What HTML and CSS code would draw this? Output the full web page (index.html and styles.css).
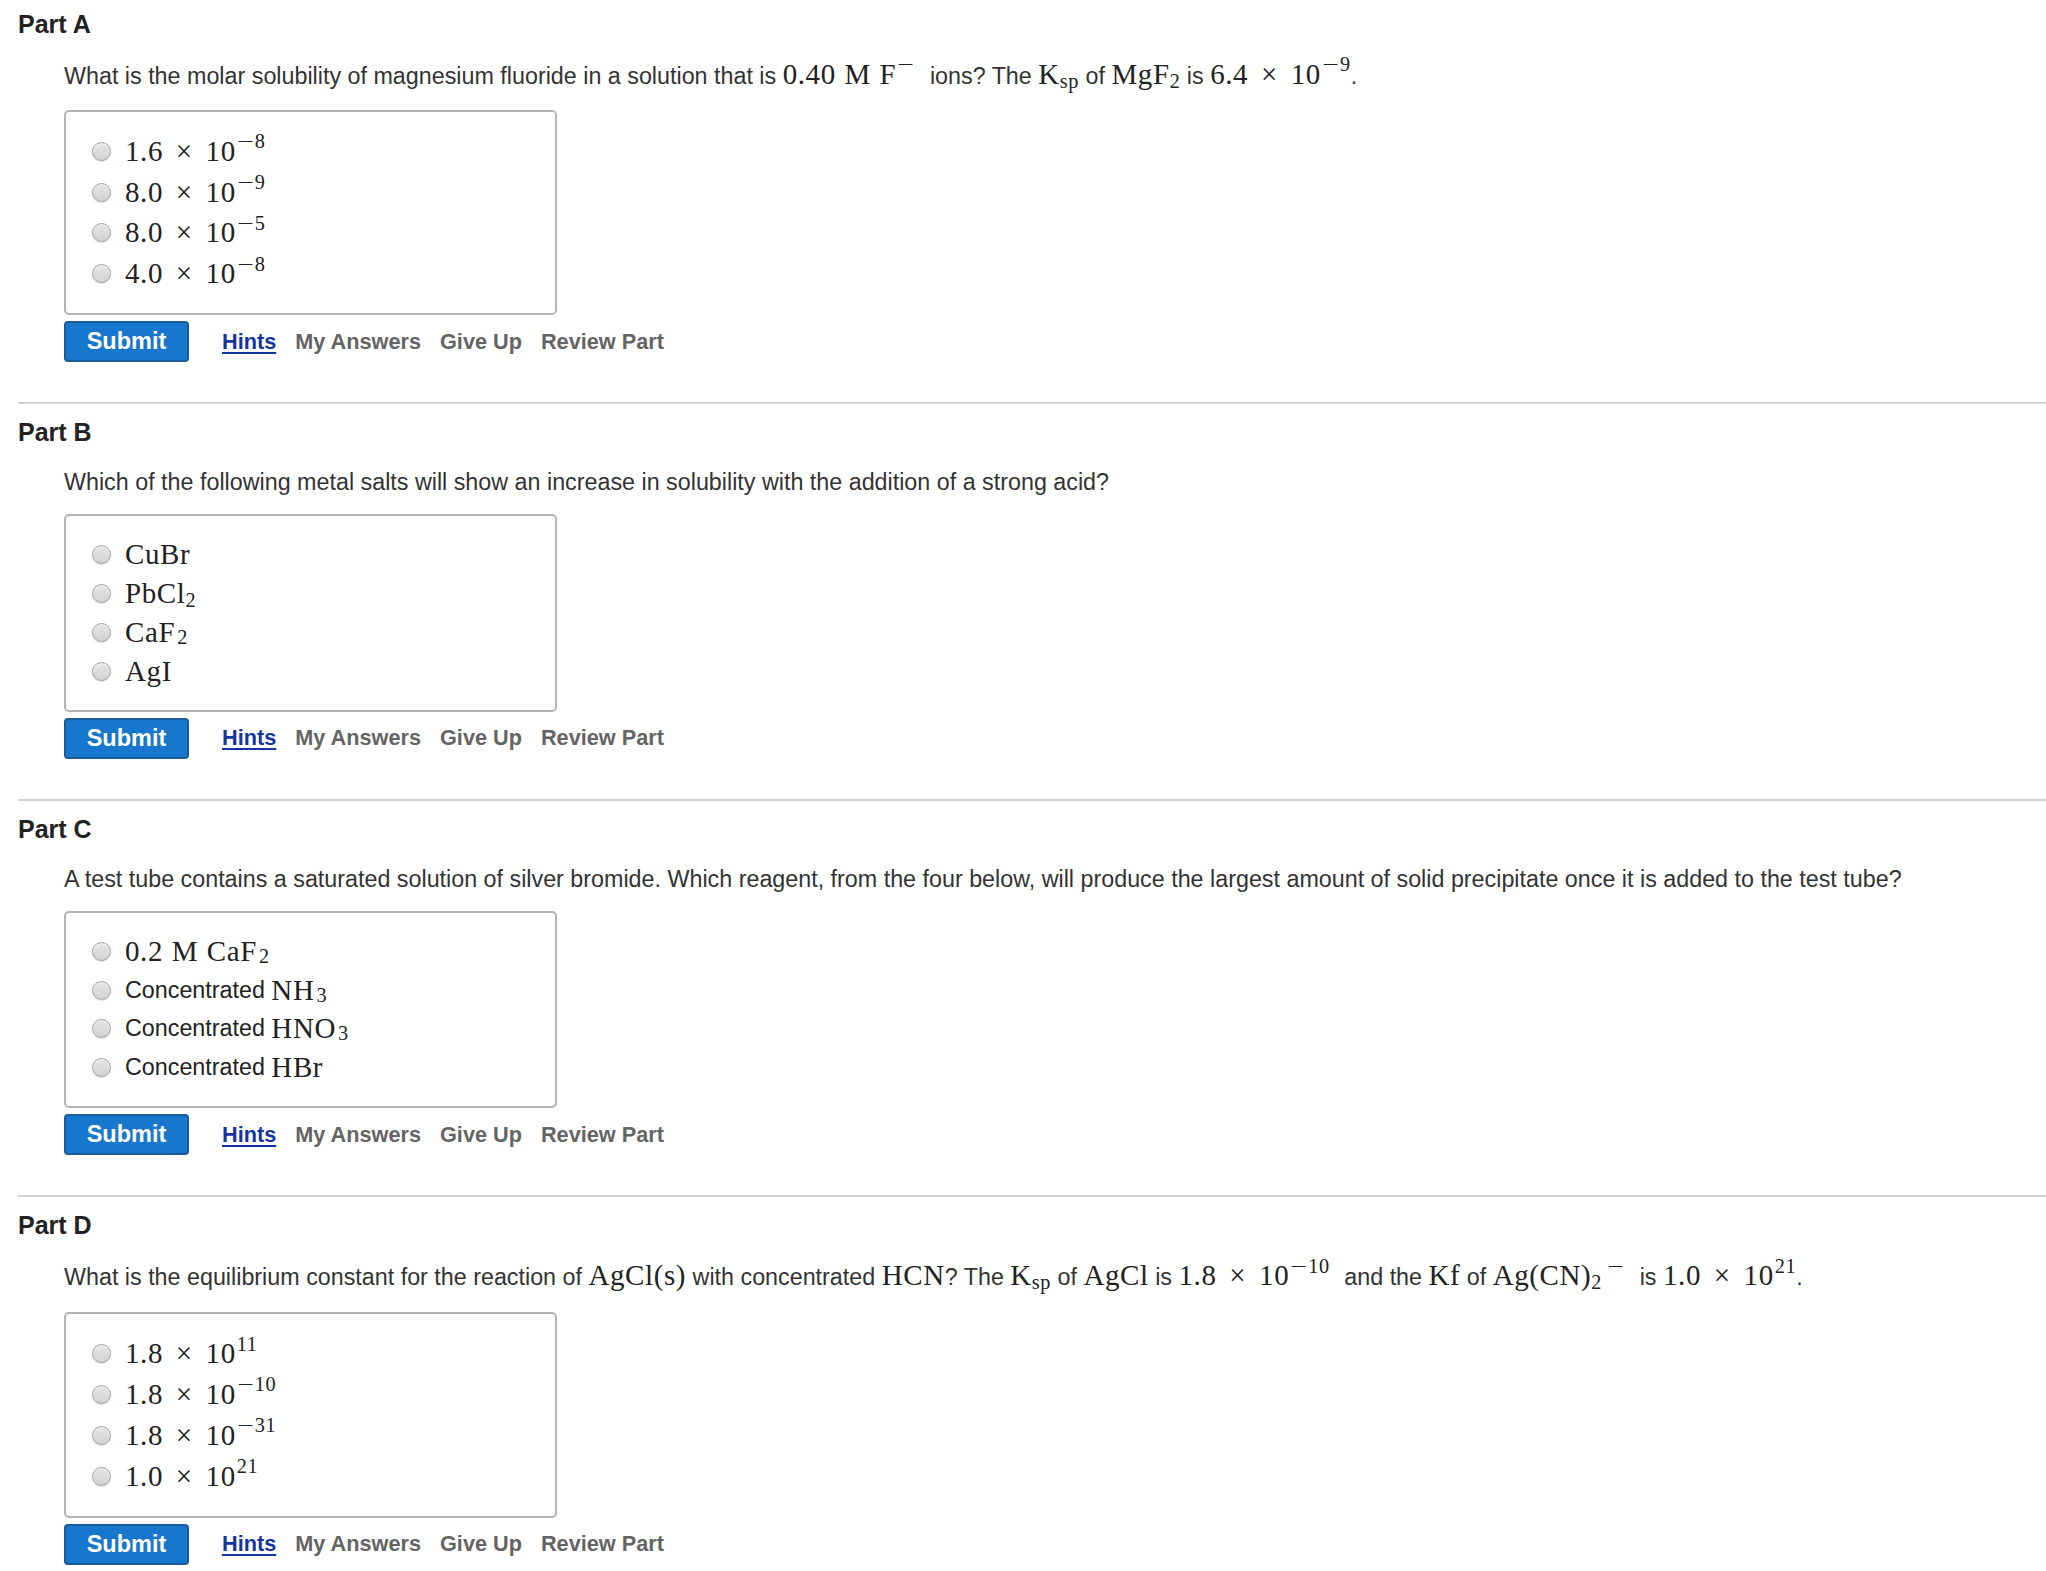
FILE: index.html
```html
<!DOCTYPE html>
<html lang="en">
<head>
<meta charset="utf-8">
<title>Solubility Parts</title>
<link rel="stylesheet" href="styles.css">
</head>
<body>

<section class="part">
  <h2 class="part-title">Part A</h2>
  <p class="question tall">What is the molar solubility of magnesium fluoride in a solution that is <span class="m">0.40<span class="sp"></span>M<span class="sp"></span>F<span class="sup"><span class="neg">−</span></span></span><span class="gap"></span> ions? The <span class="m">K<span class="sub">sp</span></span> of <span class="m">MgF<span class="sub">2</span></span> is <span class="m">6.4<span class="x">×</span>10<span class="sup"><span class="neg">−</span>9</span></span>.</p>
  <div class="choices tall">
    <label class="choice"><span class="radio"></span><span class="m">1.6<span class="x">×</span>10<span class="sup"><span class="neg">−</span>8</span></span></label>
    <label class="choice"><span class="radio"></span><span class="m">8.0<span class="x">×</span>10<span class="sup"><span class="neg">−</span>9</span></span></label>
    <label class="choice"><span class="radio"></span><span class="m">8.0<span class="x">×</span>10<span class="sup"><span class="neg">−</span>5</span></span></label>
    <label class="choice"><span class="radio"></span><span class="m">4.0<span class="x">×</span>10<span class="sup"><span class="neg">−</span>8</span></span></label>
  </div>
  <div class="actions">
    <button class="submit" type="button">Submit</button>
    <nav class="links">
      <a class="link hint" href="#">Hints</a>
      <a class="link" href="#">My Answers</a>
      <a class="link" href="#">Give Up</a>
      <a class="link" href="#">Review Part</a>
    </nav>
  </div>
</section>
<hr class="divider">

<section class="part">
  <h2 class="part-title">Part B</h2>
  <p class="question">Which of the following metal salts will show an increase in solubility with the addition of a strong acid?</p>
  <div class="choices">
    <label class="choice"><span class="radio"></span><span class="m">CuBr</span></label>
    <label class="choice"><span class="radio"></span><span class="m">PbCl<span class="sub">2</span></span></label>
    <label class="choice"><span class="radio"></span><span class="m">CaF<span class="sub sep">2</span></span></label>
    <label class="choice"><span class="radio"></span><span class="m">AgI</span></label>
  </div>
  <div class="actions">
    <button class="submit" type="button">Submit</button>
    <nav class="links">
      <a class="link hint" href="#">Hints</a>
      <a class="link" href="#">My Answers</a>
      <a class="link" href="#">Give Up</a>
      <a class="link" href="#">Review Part</a>
    </nav>
  </div>
</section>
<hr class="divider">

<section class="part">
  <h2 class="part-title">Part C</h2>
  <p class="question">A test tube contains a saturated solution of silver bromide. Which reagent, from the four below, will produce the largest amount of solid precipitate once it is added to the test tube?</p>
  <div class="choices">
    <label class="choice"><span class="radio"></span><span class="m">0.2<span class="sp"></span>M<span class="sp"></span>CaF<span class="sub sep">2</span></span></label>
    <label class="choice"><span class="radio"></span><span class="t">Concentrated </span><span class="m">NH<span class="sub sep">3</span></span></label>
    <label class="choice"><span class="radio"></span><span class="t">Concentrated </span><span class="m">HNO<span class="sub sep">3</span></span></label>
    <label class="choice"><span class="radio"></span><span class="t">Concentrated </span><span class="m">HBr</span></label>
  </div>
  <div class="actions">
    <button class="submit" type="button">Submit</button>
    <nav class="links">
      <a class="link hint" href="#">Hints</a>
      <a class="link" href="#">My Answers</a>
      <a class="link" href="#">Give Up</a>
      <a class="link" href="#">Review Part</a>
    </nav>
  </div>
</section>
<hr class="divider">

<section class="part">
  <h2 class="part-title">Part D</h2>
  <p class="question tall spaced">What is the equilibrium constant for the reaction of <span class="m">AgCl(s)</span> with concentrated <span class="m">HCN</span>? The <span class="m">K<span class="sub">sp</span></span> of <span class="m">AgCl</span> is <span class="m">1.8<span class="x">×</span>10<span class="sup"><span class="neg">−</span>10</span></span><span class="gap"></span> and the <span class="m">Kf</span> of <span class="m">Ag(CN)<span class="sub">2</span><span class="sup wide"><span class="neg">−</span></span></span><span class="gap"></span> is <span class="m">1.0<span class="x">×</span>10<span class="sup">21</span></span>.</p>
  <div class="choices tall">
    <label class="choice"><span class="radio"></span><span class="m">1.8<span class="x">×</span>10<span class="sup">11</span></span></label>
    <label class="choice"><span class="radio"></span><span class="m">1.8<span class="x">×</span>10<span class="sup"><span class="neg">−</span>10</span></span></label>
    <label class="choice"><span class="radio"></span><span class="m">1.8<span class="x">×</span>10<span class="sup"><span class="neg">−</span>31</span></span></label>
    <label class="choice"><span class="radio"></span><span class="m">1.0<span class="x">×</span>10<span class="sup">21</span></span></label>
  </div>
  <div class="actions">
    <button class="submit" type="button">Submit</button>
    <nav class="links">
      <a class="link hint" href="#">Hints</a>
      <a class="link" href="#">My Answers</a>
      <a class="link" href="#">Give Up</a>
      <a class="link" href="#">Review Part</a>
    </nav>
  </div>
</section>

</body>
</html>
```

FILE: styles.css
```css
html, body {
  background: #ffffff;
}

body {
  margin: 0;
  padding: 9px 0 0 18px;
  font-family: "Liberation Sans", Arial, Helvetica, sans-serif;
  color: #333333;
  overflow: hidden;
}

.part {
  padding-bottom: 40px;
}

.part-title {
  margin: 0;
  font-size: 25px;
  line-height: 30px;
  font-weight: bold;
  color: #222222;
}

.divider + .part .part-title {
  margin-top: 13px;
}

.question {
  margin: 19px 0 16px 46px;
  font-size: 23.3px;
  line-height: 32px;
  color: #333333;
  white-space: nowrap;
}

.question.tall {
  margin-top: 17px;
  margin-bottom: 16px;
  line-height: 36px;
}

.question.tall.spaced {
  margin-bottom: 17px;
}

.m {
  font-family: "Liberation Serif", "Times New Roman", serif;
  font-size: 29px;
  letter-spacing: 0.6px;
  color: #222222;
}

.sp {
  display: inline-block;
  width: 0.3em;
}

.gap {
  display: inline-block;
  width: 8px;
}

.x {
  margin: 0 0.44em;
  font-size: 1em;
}

.sup {
  font-size: 0.7em;
  line-height: 0;
  vertical-align: 0.62em;
  margin-left: 1px;
}

.sup.wide {
  margin-left: 5px;
}

.neg {
  display: inline-block;
  transform: scaleX(1.45);
  margin: 0 0.16em 0 0.14em;
}

.sub {
  font-size: 0.7em;
  line-height: 0;
  vertical-align: -0.22em;
}

.sub.sep {
  margin-left: 2px;
  vertical-align: -0.1em;
}

.choices {
  margin-left: 46px;
  width: 493px;
  box-sizing: border-box;
  border: 2px solid #b4b4b4;
  border-radius: 5px;
  padding: 19px 0 19px 26px;
}

.choice {
  display: flex;
  align-items: center;
  height: 38.9px;
}

.choices.tall .choice {
  height: 40.8px;
}

.radio {
  flex: none;
  width: 19px;
  height: 19px;
  box-sizing: border-box;
  border-radius: 50%;
  border: 1px solid #a2a2a2;
  background: linear-gradient(#e6e6e6, #d2d2d2);
  box-shadow: inset 0 1px 1px rgba(255, 255, 255, 0.7), 0 1px 1px rgba(0, 0, 0, 0.14);
  margin-right: 14px;
}

.t {
  font-size: 23.3px;
  color: #222222;
  white-space: pre;
}

.actions {
  display: flex;
  align-items: center;
  margin: 6px 0 0 46px;
}

.submit {
  width: 125px;
  height: 41px;
  box-sizing: border-box;
  border: 2px solid #1b5c98;
  border-radius: 4px;
  background: #1777cc;
  color: #ffffff;
  font-family: "Liberation Sans", Arial, Helvetica, sans-serif;
  font-weight: bold;
  font-size: 23.5px;
  padding: 0;
}

.links {
  display: flex;
  gap: 19px;
  margin-left: 33px;
}

.link {
  font-size: 21.7px;
  font-weight: bold;
  color: #646464;
  text-decoration: none;
}

.link.hint {
  color: #1434a0;
  text-decoration: underline;
  text-underline-offset: 3px;
  text-decoration-thickness: 2px;
}

.divider {
  margin: 0;
  border: 0;
  height: 2px;
  background: #d2d2d2;
}
```
